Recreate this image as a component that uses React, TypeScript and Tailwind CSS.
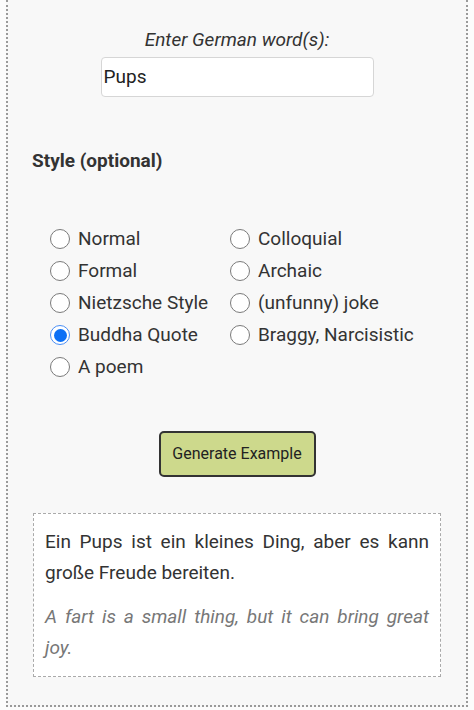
import React from "react";

const left = ["Normal", "Formal", "Nietzsche Style", "Buddha Quote", "A poem"];
const right = ["Colloquial", "Archaic", "(unfunny) joke", "Braggy, Narcisistic"];

function Radio({ label, checked }: { label: string; checked?: boolean }) {
  return (
    <div className="flex items-center h-[32px]">
      {checked ? (
        <span className="w-[20px] h-[20px] rounded-full border-[1.5px] border-[#4a8ef5] bg-white flex items-center justify-center shrink-0">
          <span className="w-[13px] h-[13px] rounded-full bg-[#0b6ff5]" />
        </span>
      ) : (
        <span className="w-[20px] h-[20px] rounded-full border-[1.5px] border-[#7a7a7a] bg-white shrink-0" />
      )}
      <span className="ml-[8px] text-[19px] text-[#333] whitespace-nowrap">{label}</span>
    </div>
  );
}

export default function App() {
  return (
    <div className="min-h-[710px] bg-[#fcfcfc] px-[6px]" style={{ fontFamily: "Roboto, 'Noto Sans', sans-serif" }}>
      <div className="h-[707px] bg-[#f8f8f8] border-x-2 border-b-2 border-dotted border-[#9a9a9a] flex flex-col">
        <div className="pt-[28px] text-center italic text-[19px] text-[#333] leading-[24px]">Enter German word(s):</div>
        <div className="flex justify-center mt-[5px]">
          <div className="w-[273px] h-[40px] bg-white border border-[#d6d6d6] rounded-[4px] flex items-center pl-[2px] text-[19px] text-[#222]">
            Pups
          </div>
        </div>
        <div className="mt-[52px] pl-[24px] font-bold text-[19px] text-[#333] leading-[24px]">Style (optional)</div>
        <div className="mt-[50px] pl-[42px] flex">
          <div className="w-[180px] flex flex-col">
            {left.map((l) => (
              <Radio key={l} label={l} checked={l === "Buddha Quote"} />
            ))}
          </div>
          <div className="flex flex-col">
            {right.map((l) => (
              <Radio key={l} label={l} />
            ))}
          </div>
        </div>
        <div className="flex justify-center mt-[48px]">
          <div className="w-[157px] h-[46px] bg-[#cdd98c] border-2 border-[#333] rounded-[5px] flex items-center justify-center text-[16px] text-[#222]">
            Generate Example
          </div>
        </div>
        <div className="mx-[25px] mt-[36px] bg-white border border-dashed border-[#aaa] px-[11px] pt-[12px] pb-[13px]">
          <p className="text-[19px] leading-[31px] text-[#333] text-justify">
            Ein Pups ist ein kleines Ding, aber es kann große Freude bereiten.
          </p>
          <p className="mt-[13px] text-[19px] leading-[31px] text-[#777] italic text-justify">
            A fart is a small thing, but it can bring great joy.
          </p>
        </div>
      </div>
    </div>
  );
}
